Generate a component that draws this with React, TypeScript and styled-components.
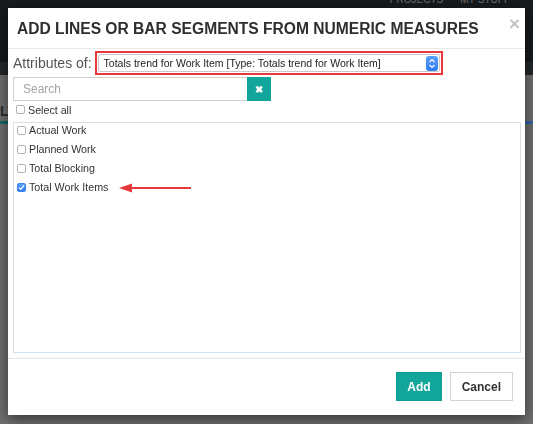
import React, { FC } from 'react'
import styled, { createGlobalStyle } from 'styled-components'

const GlobalStyle = createGlobalStyle`
	html, body {
		margin: 0;
		padding: 0;
		width: 533px;
		height: 424px;
		overflow: hidden;
		background: #707070;
		font-family: "Liberation Sans", Arial, sans-serif;
	}
`

interface CheckProps {
	checked?: boolean
}

const Page = styled.div`
	width: 533px;
	height: 424px;
	display: flex;
	flex-direction: column;
	background: #707070;
`

const TopBar = styled.div`
	height: 62px;
	background: #171b1e;
	display: flex;
	justify-content: flex-end;
	align-items: flex-start;
	gap: 17px;
	padding-right: 23px;
`

const TopLink = styled.span`
	font-size: 10px;
	line-height: 10px;
	color: #6d7277;
	margin-top: -5px;
`

const SubBar = styled.div`
	height: 13px;
	background: #23282c;
`

const PageBody = styled.div`
	flex: 1;
	display: flex;
	justify-content: space-between;
`

const SideStrip = styled.div`
	width: 20px;
	display: flex;
	flex-direction: column;
`

const TabLabel = styled.div<{ tint: string }>`
	margin-top: 26px;
	height: 20px;
	font-size: 14px;
	font-weight: bold;
	color: ${props => props.tint};
	border-bottom: 3px solid ${props => props.tint === '#2a2a2a' ? '#106b66' : '#3566a8'};
	line-height: 20px;
`

const Modal = styled.div`
	position: fixed;
	left: 8px;
	top: 8px;
	width: 517px;
	height: 407px;
	background: #fff;
	box-shadow: 0 4px 14px rgba(0, 0, 0, 0.55);
	display: flex;
	flex-direction: column;
`

const Header = styled.div`
	height: 40px;
	border-bottom: 1px solid #e8e8e8;
	display: flex;
	align-items: center;
	padding: 0 5px 0 9px;
	position: relative;
`

const Title = styled.h4`
	margin: 0;
	font-size: 15.6px;
	font-weight: bold;
	color: #2e2e2e;
	padding-top: 1px;
	white-space: nowrap;
`

const Close = styled.span`
	position: absolute;
	right: 5px;
	top: 6px;
	font-size: 19px;
	font-weight: bold;
	color: #c4c4c4;
	line-height: 1;
`

const Body = styled.div`
	flex: 1;
	padding: 2px 4px 5px 5px;
	display: flex;
	flex-direction: column;
`

const AttrRow = styled.div`
	display: flex;
	align-items: center;
	gap: 3px;
`

const Label = styled.span`
	font-size: 14px;
	color: #555;
`

const Highlight = styled.div`
	border: 2px solid #e8383e;
	padding: 1px;
	width: 342px;
`

const Select = styled.div`
	height: 16px;
	border: 1px solid #c9c9c9;
	border-radius: 2px;
	display: flex;
	align-items: center;
	justify-content: space-between;
	padding-left: 5px;
	background: #fff;
`

const SelectText = styled.span`
	font-size: 10.5px;
	color: #1e1e1e;
	white-space: nowrap;
`

const Stepper = styled.span`
	width: 12px;
	height: 15px;
	margin-right: 1px;
	border-radius: 3px;
	background: linear-gradient(#5aa0f8, #2f7cf0);
	display: flex;
	align-items: center;
	justify-content: center;
`

const SearchRow = styled.div`
	display: flex;
	margin-top: 2px;
`

const SearchInput = styled.div`
	width: 224px;
	height: 22px;
	border: 1px solid #cfcfcf;
	border-right: none;
	padding-left: 9px;
	display: flex;
	align-items: center;
	font-size: 12px;
	color: #a3a3a3;
`

const ClearButton = styled.span`
	width: 24px;
	height: 24px;
	background: #11a59b;
	color: #fff;
	display: flex;
	align-items: center;
	justify-content: center;
	font-size: 10px;
	font-weight: bold;
`

const Option = styled.label`
	display: flex;
	align-items: center;
	gap: 2px;
	height: 14px;
	margin-bottom: 5px;
	font-size: 10.7px;
	color: #333;
	padding-left: 3px;
`

const AllOption = styled(Option)`
	height: 15px;
	margin-top: 1px;
	margin-bottom: 5px;
`

const Box = styled.span<CheckProps>`
	width: 7px;
	height: 7px;
	border: 1px solid ${props => props.checked ? '#3a86f0' : '#b3b3b3'};
	border-radius: 2px;
	background: ${props => props.checked ? 'linear-gradient(#5ea3f9, #2e7bef)' : '#fff'};
	display: flex;
	align-items: center;
	justify-content: center;
	margin-right: 1px;
`

const List = styled.div`
	flex: 1;
	border: 1px solid #dedede;
	border-bottom-color: #cfe3ef;
	padding-top: 0;
	display: flex;
	flex-direction: column;
	position: relative;
`

const Arrow = styled.svg`
	position: absolute;
	left: 104px;
	top: 59px;
`

const Footer = styled.div`
	height: 55px;
	border-top: 1px solid #e6e6e6;
	display: flex;
	justify-content: flex-end;
	align-items: center;
	gap: 8px;
	padding-right: 12px;
	padding-bottom: 1px;
`

const Button = styled.button<{ primary?: boolean }>`
	height: 29px;
	padding: 0 ${props => props.primary ? '10px' : '11px'};
	border: 1px solid ${props => props.primary ? '#0f9e94' : '#d3d3d3'};
	background: ${props => props.primary ? '#11a59b' : '#fff'};
	color: ${props => props.primary ? '#fff' : '#333'};
	font-family: "Liberation Sans", Arial, sans-serif;
	font-size: 12px;
	font-weight: bold;
	border-radius: 0;
`

const Check: FC<CheckProps> = ({ checked }) => (
	<Box checked={checked}>
		{checked && (
			<svg width="7" height="7" viewBox="0 0 7 7">
				<path d="M1 3.6 L2.8 5.4 L6 1.4" stroke="#fff" strokeWidth="1.3" fill="none" />
			</svg>
		)}
	</Box>
)

const measures = [
	{ name: 'Actual Work', checked: false },
	{ name: 'Planned Work', checked: false },
	{ name: 'Total Blocking', checked: false },
	{ name: 'Total Work Items', checked: true },
]

export default function App() {
	return (
		<>
			<GlobalStyle />
			<Page>
				<TopBar>
					<TopLink>PROJECTS</TopLink>
					<TopLink>MY STUFF</TopLink>
				</TopBar>
				<SubBar />
				<PageBody>
					<SideStrip>
						<TabLabel tint="#2a2a2a">LT</TabLabel>
					</SideStrip>
					<SideStrip>
						<TabLabel tint="#3566a8">L</TabLabel>
					</SideStrip>
				</PageBody>
			</Page>

			<Modal>
				<Header>
					<Title>ADD LINES OR BAR SEGMENTS FROM NUMERIC MEASURES</Title>
					<Close>×</Close>
				</Header>
				<Body>
					<AttrRow>
						<Label>Attributes of:</Label>
						<Highlight>
							<Select>
								<SelectText>Totals trend for Work Item [Type: Totals trend for Work Item]</SelectText>
								<Stepper>
									<svg width="8" height="11" viewBox="0 0 8 11">
										<path d="M1.5 4 L4 1.5 L6.5 4 M1.5 7 L4 9.5 L6.5 7" stroke="#fff" strokeWidth="1.2" fill="none" />
									</svg>
								</Stepper>
							</Select>
						</Highlight>
					</AttrRow>
					<SearchRow>
						<SearchInput>Search</SearchInput>
						<ClearButton>✖</ClearButton>
					</SearchRow>
					<AllOption>
						<Check />
						Select all
					</AllOption>
					<List>
						{measures.map(m => (
							<Option key={m.name}>
								<Check checked={m.checked} />
								{m.name}
							</Option>
						))}
						<Arrow width="74" height="12" viewBox="0 0 74 12">
							<path d="M12 6 L73 6" stroke="#e5393b" strokeWidth="2" />
							<path d="M1 6 L14 1.5 L14 10.5 Z" fill="#e5393b" />
						</Arrow>
					</List>
				</Body>
				<Footer>
					<Button primary>Add</Button>
					<Button>Cancel</Button>
				</Footer>
			</Modal>
		</>
	)
}
